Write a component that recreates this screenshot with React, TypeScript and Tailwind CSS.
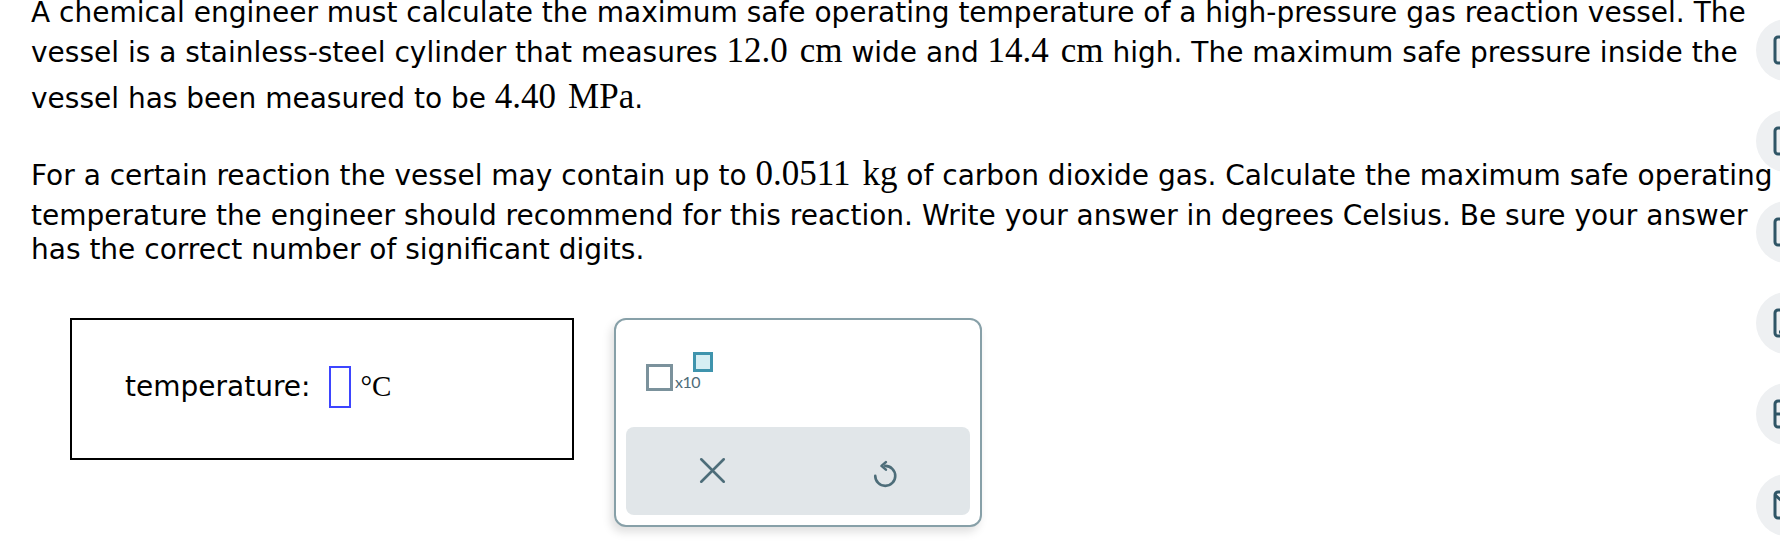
import React from 'react';

const sans = "font-['DejaVu_Sans','Verdana',sans-serif]";
const serif = "font-['Liberation_Serif','Times_New_Roman',serif]";

function M({ n, u }: { n: string; u: string }) {
  return (
    <span className={`inline-block ${serif} text-[35px] leading-[42px] pb-[4px]`}>
      {n}
      <span className="ml-[12px]">{u}</span>
    </span>
  );
}

function SideIcon({ kind }: { kind: number }) {
  const c = '#2f5566';
  return (
    <svg width="28" height="30" viewBox="0 0 28 30" fill="none" stroke={c} strokeWidth="3" strokeLinejoin="round">
      <rect x="2" y="2" width="24" height="26" rx="3" />
      {kind === 3 && <path d="M6 24h3" />}
      {kind === 4 && <path d="M2 15h8" />}
      {kind === 5 && <path d="M2 5l8 7" />}
    </svg>
  );
}

const tools = [0, 1, 2, 3, 4, 5];

export default function App() {
  return (
    <div className={`relative w-full h-[548px] overflow-hidden bg-white text-black ${sans}`}>
      <div className="pl-[31px] pr-[2px] text-[28px] leading-[34px] -mt-[4px]">
        <p>
          A chemical engineer must calculate the maximum safe operating temperature of a high-pressure gas reaction vessel. The
          <br />
          vessel is a stainless-steel cylinder that measures <M n="12.0" u="cm" /> wide and <M n="14.4" u="cm" /> high. The
          maximum safe pressure inside the
          <br />
          vessel has been measured to be <M n="4.40" u="MPa" />.
        </p>
        <p className="mt-[31px]">
          For a certain reaction the vessel may contain up to <M n="0.0511" u="kg" /> of carbon dioxide gas. Calculate the
          maximum safe operating
          <br />
          temperature the engineer should recommend for this reaction. Write your answer in degrees Celsius. Be sure your
          answer
          <br />
          has the correct number of significant digits.
        </p>
      </div>

      <div className="flex items-start gap-[40px] pl-[70px] mt-[51px]">
        <div className="w-[504px] h-[142px] border-2 border-black flex items-center pl-[53px] pb-[4px]">
          <span className="text-[28px]">temperature:</span>
          <span className="ml-[19px] w-[22px] h-[42px] border-2 border-[#3d45ff]" />
          <span className={`${serif} text-[29px] ml-[9px]`}>°C</span>
        </div>

        <div className="w-[368px] h-[209px] border-2 border-[#87a0a8] rounded-[12px] bg-white p-[10px] flex flex-col shadow-[-3px_5px_10px_rgba(0,0,0,0.13)]">
          <div className="h-[97px] pl-[20px] pt-[22px]">
            <div className="flex items-end h-[39px]">
              <span className="w-[27px] h-[27px] border-[3px] border-[#7b929c]" />
              <span className="ml-[2px] mb-[1px] text-[16px] leading-none text-[#4e6b78] font-['Lato',sans-serif] tracking-[-0.5px]">
                x10
              </span>
              <span className="self-start -ml-[7px] w-[20px] h-[20px] border-[3px] border-[#3f94ad] bg-[#d6eef3]" />
            </div>
          </div>
          <div className="h-[89px] bg-[#e1e6e9] rounded-[8px] grid grid-cols-2">
            <div className="flex items-center justify-center">
              <svg width="27" height="27" viewBox="0 0 24 24" fill="none" stroke="#4d6d79" strokeWidth="2.3" strokeLinecap="round">
                <path d="M2 2l20 20M22 2L2 22" />
              </svg>
            </div>
            <div className="flex items-center justify-center pt-[6px]">
              <svg width="30" height="30" viewBox="0 0 24 24" fill="none" stroke="#4d6d79" strokeWidth="2.1" strokeLinecap="round" strokeLinejoin="round">
                <path d="M13 5.5a8 8 0 1 1-8 8" />
                <path d="M13.5 2.5L10 5.5l3.5 3" />
              </svg>
            </div>
          </div>
        </div>
      </div>

      <div className="absolute left-[1756px] top-[19px] flex flex-col gap-[29px]">
        {tools.map((t) => (
          <div key={t} className="w-[62px] h-[62px] rounded-full bg-[#eef0f2] flex items-center justify-center">
            <SideIcon kind={t} />
          </div>
        ))}
      </div>
    </div>
  );
}
